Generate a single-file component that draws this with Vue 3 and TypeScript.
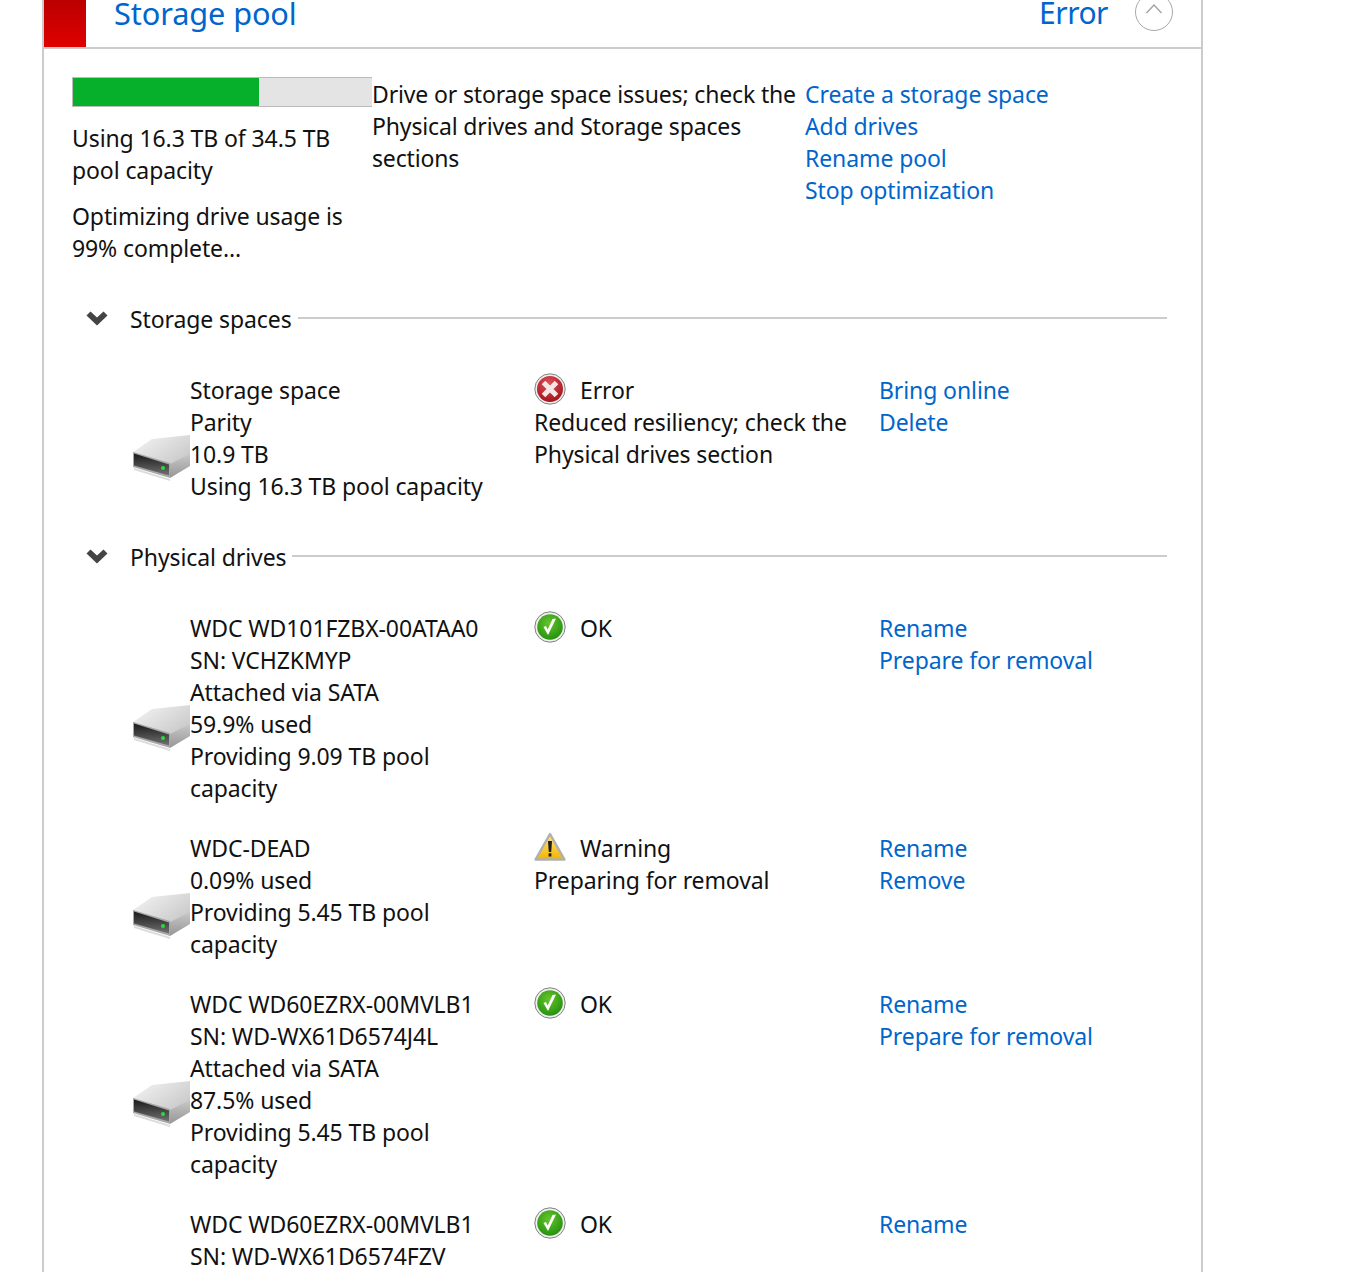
<script setup lang="ts">
type Status = "ok" | "warn" | "error";
interface Item { lines: string[]; status: Status; label: string; notes: string[]; actions: string[] }

const spaces: Item[] = [
  { lines: ["Storage space", "Parity", "10.9 TB", "Using 16.3 TB pool capacity"], status: "error", label: "Error",
    notes: ["Reduced resiliency; check the", "Physical drives section"], actions: ["Bring online", "Delete"] },
];
const drives: Item[] = [
  { lines: ["WDC WD101FZBX-00ATAA0", "SN: VCHZKMYP", "Attached via SATA", "59.9% used", "Providing 9.09 TB pool", "capacity"],
    status: "ok", label: "OK", notes: [], actions: ["Rename", "Prepare for removal"] },
  { lines: ["WDC-DEAD", "0.09% used", "Providing 5.45 TB pool", "capacity"],
    status: "warn", label: "Warning", notes: ["Preparing for removal"], actions: ["Rename", "Remove"] },
  { lines: ["WDC WD60EZRX-00MVLB1", "SN: WD-WX61D6574J4L", "Attached via SATA", "87.5% used", "Providing 5.45 TB pool", "capacity"],
    status: "ok", label: "OK", notes: [], actions: ["Rename", "Prepare for removal"] },
  { lines: ["WDC WD60EZRX-00MVLB1", "SN: WD-WX61D6574FZV", "Attached via SATA", "87.5% used", "Providing 5.45 TB pool", "capacity"],
    status: "ok", label: "OK", notes: [], actions: ["Rename"] },
];
const sections = [
  { title: "Storage spaces", items: spaces },
  { title: "Physical drives", items: drives },
];
const poolLinks = ["Create a storage space", "Add drives", "Rename pool", "Stop optimization"];
</script>

<template>
  <div class="page">
    <div class="card">
      <header class="head">
        <div class="swatch"></div>
        <div class="title">Storage pool</div>
        <div class="state">Error</div>
        <div class="collapse">
          <svg width="38" height="38" viewBox="0 0 38 38">
            <circle cx="19" cy="19" r="18.5" fill="#fff" stroke="#a8a8a8" />
            <path d="M11.5 20 L19 12 L26.5 20" fill="none" stroke="#a0a0a0" stroke-width="1.3" />
          </svg>
        </div>
      </header>

      <div class="pool">
        <div class="pool-usage">
          <div class="bar"><div class="fill"></div></div>
          <p>Using 16.3 TB of 34.5 TB<br />pool capacity</p>
          <p>Optimizing drive usage is<br />99% complete...</p>
        </div>
        <div class="pool-msg">Drive or storage space issues; check the<br />Physical drives and Storage spaces<br />sections</div>
        <div class="pool-links">
          <a v-for="l in poolLinks" :key="l">{{ l }}</a>
        </div>
      </div>

      <section v-for="s in sections" :key="s.title" class="section">
        <div class="sec-head">
          <svg class="chev" width="22" height="16" viewBox="0 0 22 16">
            <path d="M0.5 4.5 L4.5 0.5 L11 6.5 L17.5 0.5 L21.5 4.5 L11 14.5 Z" fill="#444" />
          </svg>
          <span class="sec-title">{{ s.title }}</span>
          <span class="sec-rule"></span>
        </div>
        <div class="rows">
          <div v-for="(it, i) in s.items" :key="i" class="row">
            <div class="drive">
              <svg width="58" height="46" viewBox="0 0 58 46">
                <defs>
                  <linearGradient id="top" x1="0" y1="0" x2="1" y2="1">
                    <stop offset="0" stop-color="#f6f6f6" />
                    <stop offset="1" stop-color="#bcbcbc" />
                  </linearGradient>
                  <linearGradient id="side" x1="0" y1="0" x2="0" y2="1">
                    <stop offset="0" stop-color="#c8c8c8" />
                    <stop offset="1" stop-color="#969696" />
                  </linearGradient>
                  <linearGradient id="front" x1="0" y1="0" x2="0" y2="1">
                    <stop offset="0" stop-color="#1a1a1a" />
                    <stop offset="1" stop-color="#707070" />
                  </linearGradient>
                </defs>
                <path d="M1 17 L20 4 L58 0 L58 30 L38 41 L1 30 Z" fill="url(#top)" />
                <path d="M38 29 L58 19 L58 31 L38 43 Z" fill="url(#side)" />
                <path d="M1 17 L38 28 L38 43 L1 32 Z" fill="#a8a8a8" />
                <path d="M2 18.5 L37 29.5 L37 40.5 L2 30.5 Z" fill="url(#front)" />
                <circle cx="31" cy="33" r="2" fill="#2bd83e" />
                <path d="M2 33 L38 44 L38 46 L2 35 Z" fill="#dcdcdc" />
              </svg>
            </div>
            <div class="col-info">
              <div v-for="l in it.lines" :key="l">{{ l }}</div>
            </div>
            <div class="col-status">
              <div class="status-line">
                <svg v-if="it.status === 'ok'" class="st-icon" width="32" height="32" viewBox="0 0 32 32">
                  <defs>
                    <radialGradient id="okg" cx="0.45" cy="0.35" r="0.75">
                      <stop offset="0" stop-color="#66c52a" />
                      <stop offset="1" stop-color="#1c8a0c" />
                    </radialGradient>
                  </defs>
                  <circle cx="16" cy="16" r="15.2" fill="#f0f0f0" stroke="#808080" />
                  <circle cx="16" cy="16" r="12.8" fill="url(#okg)" />
                  <path d="M9.5 16 L14 24 L22 7.5 L18.5 8 L13.7 18.5 L12 15 Z" fill="#fff" />
                </svg>
                <svg v-else-if="it.status === 'error'" class="st-icon" width="32" height="32" viewBox="0 0 32 32">
                  <defs>
                    <radialGradient id="erg" cx="0.45" cy="0.3" r="0.75">
                      <stop offset="0" stop-color="#e2505a" />
                      <stop offset="1" stop-color="#a01018" />
                    </radialGradient>
                  </defs>
                  <circle cx="16" cy="16" r="15.2" fill="#eee" stroke="#808080" />
                  <circle cx="16" cy="16" r="13" fill="url(#erg)" />
                  <path d="M9.5 9.5 L22.5 22.5 M22.5 9.5 L9.5 22.5" stroke="#f2e8e8" stroke-width="5" />
                </svg>
                <svg v-else class="st-icon" width="32" height="32" viewBox="0 0 32 32">
                  <defs>
                    <linearGradient id="wg" x1="0" y1="0" x2="0" y2="1">
                      <stop offset="0" stop-color="#ffe680" />
                      <stop offset="1" stop-color="#f2b400" />
                    </linearGradient>
                  </defs>
                  <path d="M16 3 L30.5 28.5 L1.5 28.5 Z" fill="url(#wg)" stroke="#b0b0b0" stroke-width="2.4" stroke-linejoin="round" />
                  <path d="M14 10 L18 10 L17.2 21 L14.8 21 Z" fill="#1c1c1c" />
                  <rect x="14.6" y="22.3" width="2.8" height="3.2" fill="#1c1c1c" />
                </svg>
                <span>{{ it.label }}</span>
              </div>
              <div v-for="n in it.notes" :key="n">{{ n }}</div>
            </div>
            <div class="col-actions">
              <a v-for="a in it.actions" :key="a">{{ a }}</a>
            </div>
          </div>
        </div>
      </section>
    </div>
  </div>
</template>

<style>
html, body { overflow: hidden; background: #fff; }
</style>

<style scoped>
.page { height: 1272px; overflow: hidden; background: #fff; padding-left: 42px;
  font-family: "Noto Sans", "Open Sans", sans-serif; font-size: 23px; letter-spacing: -0.1px; line-height: 32px; color: #111; }
.card { width: 1157px; border-left: 2px solid #ccc; border-right: 2px solid #ccc; }
a { display: block; color: #0066cc; }

.head { display: flex; height: 47px; border-bottom: 2px solid #ccc; box-sizing: content-box; color: #0066cc; }
.swatch { width: 42px; background: linear-gradient(#bb0000, #e00000); }
.title { margin-left: 28px; font-size: 30.7px; line-height: 26px; flex: 1; }
.state { font-size: 30px; line-height: 26px; letter-spacing: -0.5px; }
.collapse { margin: -7px 28px 0 27px; height: 38px; }

.pool { display: flex; padding: 28px 0 0 28px; height: 227px; box-sizing: content-box; }
.pool-usage { width: 300px; }
.pool-usage p { margin: 14px 0 0; white-space: nowrap; }
.pool-usage .bar + p { margin-top: 15px; }
.bar { height: 28px; border: 1px solid #bbb; border-right: none; background: #e4e4e4; }
.bar .fill { width: 186px; height: 100%; background: #07b02a; }
.pool-msg { width: 433px; padding-top: 1px; white-space: nowrap; letter-spacing: -0.15px; }
.pool-links { padding-top: 1px; white-space: nowrap; }

.section { padding: 0 34px 40px 42px; }
.sec-head { display: flex; align-items: center; height: 32px; }
.chev { margin-right: 22px; margin-top: -3px; }
.sec-title { white-space: nowrap; margin-top: -2px; }
.sec-rule { flex: 1; height: 2px; margin: -5px 0 0 6px; background: #ccc; }

.rows { display: flex; flex-direction: column; gap: 28px; margin-top: 38px; }
.row { display: flex; white-space: nowrap; }
.drive { width: 58px; margin-left: 46px; align-self: center; padding-top: 40px; display: flex; }
.col-info { width: 344px; }
.col-status { width: 345px; }
.status-line { display: flex; align-items: center; height: 32px; }
.st-icon { margin-right: 14px; margin-top: -2px; flex: none; }
</style>
